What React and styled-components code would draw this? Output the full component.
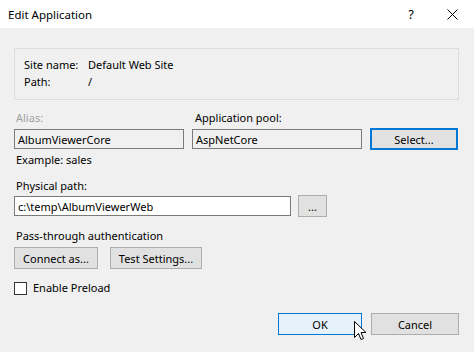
import styled, { createGlobalStyle } from "styled-components";

const GlobalStyle = createGlobalStyle`
  html, body {
    margin: 0;
    padding: 0;
    background: #f0f0f0;
  }
  body {
    font-family: "Noto Sans", "Liberation Sans", sans-serif;
    font-size: 11px;
    color: #000;
  }
`;

const Window = styled.div`
  position: relative;
  width: 474px;
  height: 352px;
  overflow: hidden;
  background: #f0f0f0;
`;

const TitleBar = styled.div`
  height: 28px;
  background: #fff;
  display: flex;
  align-items: center;
  padding-left: 8px;
  font-size: 11.5px;
`;

const TitleText = styled.div`
  flex: 1;
`;

const TitleIcon = styled.div`
  width: ${(p) => p.width}px;
  display: flex;
  justify-content: center;
  align-items: center;
  font-size: 13px;
`;

const Body = styled.div`
  padding: 20px 15px 0 14px;
  display: flex;
  flex-direction: column;
`;

const InfoBox = styled.div`
  height: 50px;
  border: 1px solid #dcdcdc;
  display: grid;
  grid-template-columns: 64px auto;
  grid-auto-rows: 17px;
  align-content: center;
  padding-left: 9px;
`;

const Label = styled.div`
  line-height: 16px;
  color: ${(p) => (p.disabled ? "#a0a0a0" : "#000")};
`;

const PoolGrid = styled.div`
  margin-top: 10px;
  display: grid;
  grid-template-columns: 170px 170px 88px;
  column-gap: 8px;
  row-gap: 2px;
  align-items: center;
`;

const Input = styled.div`
  height: 20px;
  box-sizing: border-box;
  border: 1px solid #7a7a7a;
  background: ${(p) => (p.readOnly ? "#f0f0f0" : "#fff")};
  display: flex;
  align-items: center;
  padding-left: 3px;
  width: ${(p) => (p.width ? `${p.width}px` : "auto")};
`;

const Button = styled.div`
  height: 22px;
  box-sizing: border-box;
  width: ${(p) => p.width}px;
  display: flex;
  align-items: center;
  justify-content: center;
  background: ${(p) => (p.primary ? "#e5f1fb" : "#e1e1e1")};
  border: ${(p) => (p.focused ? "2px solid #0078d7" : p.primary ? "1px solid #0078d7" : "1px solid #adadad")};
`;

const Hint = styled(Label)`
  margin-top: 2px;
  padding-left: 2px;
`;

const SectionLabel = styled(Label)`
  margin-top: ${(p) => p.top}px;
  padding-left: 2px;
`;

const Row = styled.div`
  display: flex;
  align-items: center;
  gap: ${(p) => p.gap}px;
  margin-top: ${(p) => p.top}px;
`;

const CheckBox = styled.div`
  width: 13px;
  height: 13px;
  box-sizing: border-box;
  border: 1px solid #333;
  background: #fff;
`;

const Footer = styled.div`
  display: flex;
  justify-content: flex-end;
  gap: 9px;
  margin-top: 17px;
`;

const Cursor = styled.svg`
  position: absolute;
  left: 354px;
  top: 321px;
`;

function App() {
  return (
    <Window>
      <GlobalStyle />
      <TitleBar>
        <TitleText>Edit Application</TitleText>
        <TitleIcon width={38}>?</TitleIcon>
        <TitleIcon width={44}>
          <svg width="11" height="11" viewBox="0 0 11 11">
            <path d="M0.5 0.5 L10.5 10.5 M10.5 0.5 L0.5 10.5" stroke="#000" strokeWidth="1" />
          </svg>
        </TitleIcon>
      </TitleBar>
      <Body>
        <InfoBox>
          <Label>Site name:</Label>
          <Label>Default Web Site</Label>
          <Label>Path:</Label>
          <Label>/</Label>
        </InfoBox>
        <PoolGrid>
          <Label disabled style={{ paddingLeft: 2 }}>Alias:</Label>
          <Label style={{ paddingLeft: 3 }}>Application pool:</Label>
          <div />
          <Input readOnly>AlbumViewerCore</Input>
          <Input readOnly>AspNetCore</Input>
          <Button width={88} focused>Select...</Button>
        </PoolGrid>
        <Hint>Example: sales</Hint>
        <SectionLabel top={10}>Physical path:</SectionLabel>
        <Row gap={7} top={1}>
          <Input width={277}>c:\temp\AlbumViewerWeb</Input>
          <Button width={29}>...</Button>
        </Row>
        <SectionLabel top={11}>Pass-through authentication</SectionLabel>
        <Row gap={12} top={3}>
          <Button width={84}>Connect as...</Button>
          <Button width={92}>Test Settings...</Button>
        </Row>
        <Row gap={6} top={11}>
          <CheckBox />
          <Label>Enable Preload</Label>
        </Row>
        <Footer>
          <Button width={84} primary>OK</Button>
          <Button width={88}>Cancel</Button>
        </Footer>
      </Body>
      <Cursor width="13" height="21" viewBox="0 0 13 21">
        <path
          d="M0.5 0.5 L0.5 16.5 L4.5 12.5 L7 18.5 L9.5 17.5 L7 11.5 L12 11.5 Z"
          fill="#fff"
          stroke="#000"
          strokeWidth="1"
          strokeLinejoin="round"
        />
      </Cursor>
    </Window>
  );
}

export default App;
